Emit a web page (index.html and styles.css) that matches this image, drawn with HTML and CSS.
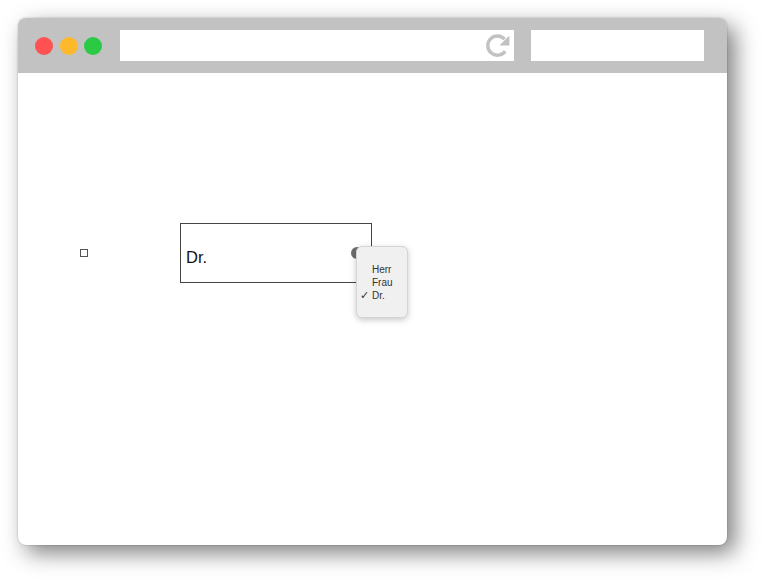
FILE: index.html
```html
<!DOCTYPE html>
<html lang="de">

<head>
    <meta charset="UTF-8">
    <title>Anrede</title>
    <link rel="stylesheet" href="styles.css">
</head>

<body>
    <div class="window">
        <div class="toolbar">
            <div class="dots">
                <span class="dot red"></span>
                <span class="dot yellow"></span>
                <span class="dot green"></span>
            </div>
            <div class="address">
                <svg class="reload" width="26" height="26" viewBox="0 0 26 26">
                    <path d="M20.2 18.2A9.6 9.6 0 1 1 19.6 6.2" fill="none" stroke="#c2c2c2" stroke-width="3.4"/>
                    <path d="M24.4 2.6V12.6H14.4Z" fill="#c2c2c2"/>
                </svg>
            </div>
            <div class="search"></div>
        </div>
        <div class="content">
            <input class="check" type="checkbox">
            <div class="selectBox">
                <span class="selectValue">Dr.</span>
                <span class="selectArrow"></span>
                <ul class="menu">
                    <li>Herr</li>
                    <li>Frau</li>
                    <li class="selected">Dr.</li>
                </ul>
            </div>
        </div>
    </div>
</body>

</html>
```
FILE: styles.css
```css
html,
body {
    margin: 0;
    background-color: #fff;
}

body {
    padding: 18px 0 0 18px;
    height: 562px;
    width: 744px;
    overflow: hidden;
    font-family: 'Liberation Sans', Arial, sans-serif;
}

.window {
    width: 709px;
    height: 527px;
    background-color: #fff;
    border-radius: 8px;
    box-shadow: 8px 8px 22px rgba(0, 0, 0, 0.5), 0 0 2px rgba(0, 0, 0, 0.25);
}

.toolbar {
    display: flex;
    align-items: center;
    height: 55px;
    padding: 0 23px 0 17px;
    background-color: #c2c2c2;
    border-radius: 8px 8px 0 0;
    box-sizing: border-box;
}

.dots {
    display: flex;
    gap: 6.5px;
    margin-right: 18px;
}

.dot {
    width: 18px;
    height: 18px;
    border-radius: 50%;
}

.red {
    background-color: #fd5152;
}

.yellow {
    background-color: #feb82c;
}

.green {
    background-color: #2aca44;
}

.address,
.search {
    height: 31px;
    background-color: #fff;
}

.address {
    display: flex;
    align-items: center;
    justify-content: flex-end;
    width: 394px;
    padding-right: 3px;
    box-sizing: border-box;
    margin-right: 17px;
}

.search {
    width: 173px;
}

.content {
    display: flex;
    align-items: center;
    padding: 150px 0 0 62px;
}

.check {
    appearance: none;
    width: 8px;
    height: 8px;
    margin: 0 92px 0 0;
    border: 1px solid #555;
    box-sizing: border-box;
    background-color: #fff;
}

.selectBox {
    position: relative;
    display: flex;
    align-items: center;
    width: 192px;
    height: 60px;
    padding: 9px 0 0 5px;
    border: 1px solid #444;
    box-sizing: border-box;
    background-color: #fff;
}

.selectValue {
    font-size: 16.5px;
    color: #111;
}

.selectArrow {
    position: absolute;
    top: 23px;
    left: 170px;
    width: 12px;
    height: 12px;
    border-radius: 50%;
    background-color: #6e6e6e;
}

.menu {
    position: absolute;
    top: 22px;
    left: 175px;
    width: 52px;
    height: 72px;
    margin: 0;
    padding: 16px 0 0 15px;
    box-sizing: border-box;
    list-style: none;
    font-size: 10px;
    line-height: 13px;
    color: #333;
    background-color: #f0f0f0;
    border: 1px solid #d4d4d4;
    border-radius: 6px;
    box-shadow: 0 2px 6px rgba(0, 0, 0, 0.22);
}

.selected {
    position: relative;
}

.selected::before {
    content: "✓";
    position: absolute;
    left: -12px;
    font-family: 'DejaVu Sans', sans-serif;
    font-size: 11px;
}
```
